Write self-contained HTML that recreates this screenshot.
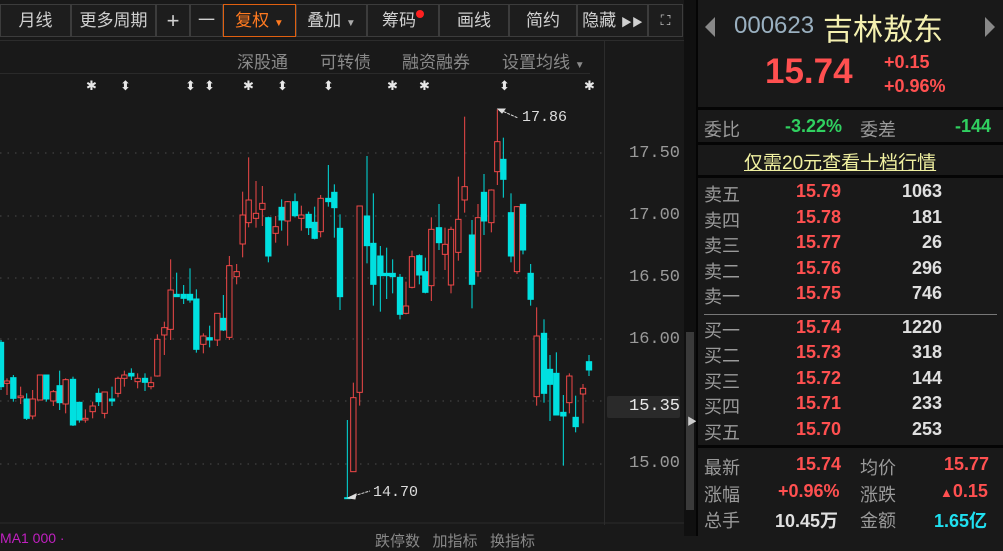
<!DOCTYPE html>
<html><head><meta charset="utf-8"><style>
*{margin:0;padding:0;box-sizing:border-box}
body{width:1003px;height:536px;overflow:hidden;background:#191919;font-family:"Liberation Sans","Noto Sans CJK SC",sans-serif;position:relative;color:#ccc}
.a{position:absolute;white-space:nowrap}
.tb{position:absolute;top:4px;height:33px;border:1px solid #3c3c3c;background:#1d1d1d;color:#d0d0d0;font-size:17px;line-height:31px;text-align:center}
.r{stroke:#f04848;fill:#191919;stroke-width:3}
.c{stroke:#00e0e0;fill:#00e0e0;stroke-width:3}
.ax{position:absolute;left:629px;font-family:"Liberation Mono",monospace;font-size:17px;color:#9a9a9a}
.lbl{position:absolute;left:704px;font-size:18px;color:#9a9a9a}
.rp{position:absolute;font-size:18px;font-weight:bold;color:#ff5050}
.vol{position:absolute;font-size:18px;font-weight:bold;color:#e0e0e0;text-align:right;width:80px;left:862px}
.mk{position:absolute;top:78px;font-size:13px;color:#e8e8e8}
</style></head><body>
<div class="tb" style="left:0;width:71px">月线</div>
<div class="tb" style="left:71px;width:85px">更多周期</div>
<div class="tb" style="left:156px;width:34px;font-size:22px">+</div>
<div class="tb" style="left:190px;width:33px">一</div>
<div class="tb" style="left:223px;width:73px;border-color:#e06010;color:#ff7a20">复权 <span style="font-size:10px">▼</span></div>
<div class="tb" style="left:296px;width:71px">叠加 <span style="font-size:10px;color:#aaa">▼</span></div>
<div class="tb" style="left:367px;width:72px">筹码<span style="display:inline-block;width:8px;height:8px;border-radius:4px;background:#ff2020;vertical-align:8px"></span></div>
<div class="tb" style="left:439px;width:70px">画线</div>
<div class="tb" style="left:509px;width:68px">简约</div>
<div class="tb" style="left:577px;width:71px">隐藏 <span style="font-size:11px">▶▶</span></div>
<div class="tb" style="left:648px;width:35px;font-size:14px">⛶</div>
<div class="a" style="left:0;top:40px;width:684px;height:1px;background:#2c2c2c"></div>
<div class="a" style="left:237px;top:48px;font-size:17px;color:#8a8a8a">深股通</div>
<div class="a" style="left:320px;top:48px;font-size:17px;color:#8a8a8a">可转债</div>
<div class="a" style="left:402px;top:48px;font-size:17px;color:#8a8a8a">融资融券</div>
<div class="a" style="left:502px;top:48px;font-size:17px;color:#8a8a8a">设置均线 <span style="font-size:10px">▼</span></div>
<div class="a" style="left:0;top:73px;width:590px;height:1px;background:#2a2a2a"></div>
<div class="a" style="left:604px;top:40px;width:1px;height:485px;background:#2c2c2c"></div>
<div class="mk" style="left:86px">✱</div><div class="mk" style="left:120px">⬍</div>
<div class="mk" style="left:185px">⬍</div><div class="mk" style="left:204px">⬍</div>
<div class="mk" style="left:243px">✱</div><div class="mk" style="left:277px">⬍</div>
<div class="mk" style="left:323px">⬍</div><div class="mk" style="left:387px">✱</div>
<div class="mk" style="left:419px">✱</div><div class="mk" style="left:499px">⬍</div>
<div class="mk" style="left:584px">✱</div>
<svg class="a" style="left:0;top:0" width="684" height="536">
<g stroke="#3a3a3a" stroke-width="1.5" stroke-dasharray="1.5 6">
<line x1="0" y1="153" x2="604" y2="153"/><line x1="0" y1="216" x2="604" y2="216"/><line x1="0" y1="278" x2="604" y2="278"/><line x1="0" y1="339" x2="604" y2="339"/><line x1="0" y1="401" x2="604" y2="401"/><line x1="0" y1="464" x2="604" y2="464"/>
</g>
<g transform="translate(0,100) scale(0.33333)">
<g class="c"><path d="M3 720V870"/><rect x="-5" y="727" width="16" height="133"/></g>
<g class="r"><path d="M21 835V885"/><rect x="13" y="843" width="16" height="7"/></g>
<g class="c"><path d="M40 825V905"/><rect x="32" y="833" width="16" height="62"/></g>
<g class="r"><path d="M62 860V912"/><rect x="54" y="888" width="16" height="5"/></g>
<g class="c"><path d="M80 880V960"/><rect x="72" y="897" width="16" height="58"/></g>
<g class="r"><path d="M98 870V958"/><rect x="90" y="897" width="16" height="51"/></g>
<g class="r"><path d="M120 825V900"/><rect x="112" y="825" width="16" height="75"/></g>
<g class="c"><path d="M139 825V905"/><rect x="131" y="825" width="16" height="72"/></g>
<g class="r"><path d="M160 870V918"/><rect x="152" y="875" width="16" height="28"/></g>
<g class="c"><path d="M179 812V930"/><rect x="171" y="857" width="16" height="51"/></g>
<g class="r"><path d="M197 835V940"/><rect x="189" y="839" width="16" height="73"/></g>
<g class="c"><path d="M219 830V978"/><rect x="211" y="838" width="16" height="137"/></g>
<g class="c"><path d="M238 905V968"/><rect x="230" y="907" width="16" height="53"/></g>
<g class="r"><path d="M256 928V968"/><rect x="248" y="955" width="16" height="5"/></g>
<g class="r"><path d="M278 905V955"/><rect x="270" y="918" width="16" height="17"/></g>
<g class="c"><path d="M296 865V918"/><rect x="288" y="880" width="16" height="25"/></g>
<g class="r"><path d="M314 875V955"/><rect x="306" y="876" width="16" height="64"/></g>
<g class="c"><path d="M336 860V918"/><rect x="328" y="897" width="16" height="6"/></g>
<g class="r"><path d="M354 830V892"/><rect x="346" y="835" width="16" height="45"/></g>
<g class="r"><path d="M373 812V860"/><rect x="365" y="825" width="16" height="10"/></g>
<g class="c"><path d="M394 805V840"/><rect x="386" y="820" width="16" height="8"/></g>
<g class="r"><path d="M413 820V865"/><rect x="405" y="835" width="16" height="10"/></g>
<g class="c"><path d="M435 820V873"/><rect x="427" y="835" width="16" height="12"/></g>
<g class="r"><path d="M453 830V868"/><rect x="445" y="848" width="16" height="12"/></g>
<g class="r"><path d="M472 703V830"/><rect x="464" y="718" width="16" height="110"/></g>
<g class="r"><path d="M493 665V765"/><rect x="485" y="683" width="16" height="22"/></g>
<g class="r"><path d="M512 478V720"/><rect x="504" y="570" width="16" height="118"/></g>
<g class="c"><path d="M530 518V590"/><rect x="522" y="583" width="16" height="7"/></g>
<g class="c"><path d="M551 555V612"/><rect x="543" y="583" width="16" height="12"/></g>
<g class="c"><path d="M570 505V608"/><rect x="562" y="583" width="16" height="17"/></g>
<g class="c"><path d="M589 568V758"/><rect x="581" y="597" width="16" height="151"/></g>
<g class="r"><path d="M610 700V760"/><rect x="602" y="708" width="16" height="25"/></g>
<g class="c"><path d="M629 677V742"/><rect x="621" y="713" width="16" height="7"/></g>
<g class="r"><path d="M652 640V738"/><rect x="644" y="640" width="16" height="80"/></g>
<g class="c"><path d="M670 585V693"/><rect x="662" y="655" width="16" height="35"/></g>
<g class="r"><path d="M688 468V720"/><rect x="680" y="497" width="16" height="215"/></g>
<g class="r"><path d="M710 492V553"/><rect x="702" y="515" width="16" height="15"/></g>
<g class="r"><path d="M728 275V472"/><rect x="720" y="345" width="16" height="87"/></g>
<g class="r"><path d="M746 172V382"/><rect x="738" y="300" width="16" height="68"/></g>
<g class="r"><path d="M768 243V383"/><rect x="760" y="340" width="16" height="15"/></g>
<g class="r"><path d="M787 258V378"/><rect x="779" y="310" width="16" height="18"/></g>
<g class="c"><path d="M805 350V487"/><rect x="797" y="353" width="16" height="115"/></g>
<g class="r"><path d="M827 348V428"/><rect x="819" y="380" width="16" height="20"/></g>
<g class="c"><path d="M845 298V392"/><rect x="837" y="322" width="16" height="38"/></g>
<g class="r"><path d="M863 303V437"/><rect x="855" y="305" width="16" height="58"/></g>
<g class="c"><path d="M885 280V352"/><rect x="877" y="305" width="16" height="42"/></g>
<g class="r"><path d="M904 317V392"/><rect x="896" y="345" width="16" height="10"/></g>
<g class="c"><path d="M926 335V405"/><rect x="918" y="343" width="16" height="40"/></g>
<g class="c"><path d="M944 320V418"/><rect x="936" y="367" width="16" height="48"/></g>
<g class="r"><path d="M962 285V412"/><rect x="954" y="295" width="16" height="100"/></g>
<g class="c"><path d="M985 195V320"/><rect x="977" y="295" width="16" height="10"/></g>
<g class="c"><path d="M1003 253V413"/><rect x="995" y="277" width="16" height="46"/></g>
<g class="c"><path d="M1020 343V630"/><rect x="1012" y="385" width="16" height="205"/></g>
</g>
<g transform="translate(340,100) scale(0.33333)">
<g class="c"><path d="M22 960V1195"/><rect x="14" y="1193" width="16" height="3"/></g>
<g class="r"><path d="M40 848V1115"/><rect x="32" y="893" width="16" height="222"/></g>
<g class="r"><path d="M59 318V917"/><rect x="51" y="318" width="16" height="559"/></g>
<g class="c"><path d="M81 168V490"/><rect x="73" y="348" width="16" height="89"/></g>
<g class="c"><path d="M100 280V617"/><rect x="92" y="430" width="16" height="123"/></g>
<g class="c"><path d="M121 438V635"/><rect x="113" y="468" width="16" height="59"/></g>
<g class="c"><path d="M140 443V597"/><rect x="132" y="520" width="16" height="7"/></g>
<g class="c"><path d="M158 478V580"/><rect x="150" y="520" width="16" height="10"/></g>
<g class="c"><path d="M180 522V658"/><rect x="172" y="532" width="16" height="111"/></g>
<g class="r"><path d="M198 545V643"/><rect x="190" y="618" width="16" height="22"/></g>
<g class="r"><path d="M216 452V565"/><rect x="208" y="470" width="16" height="92"/></g>
<g class="c"><path d="M238 463V553"/><rect x="230" y="467" width="16" height="58"/></g>
<g class="c"><path d="M256 473V580"/><rect x="248" y="515" width="16" height="62"/></g>
<g class="r"><path d="M274 352V603"/><rect x="266" y="388" width="16" height="169"/></g>
<g class="c"><path d="M297 312V450"/><rect x="289" y="383" width="16" height="45"/></g>
<g class="r"><path d="M315 383V510"/><rect x="307" y="433" width="16" height="30"/></g>
<g class="r"><path d="M333 380V580"/><rect x="325" y="388" width="16" height="167"/></g>
<g class="r"><path d="M355 230V482"/><rect x="347" y="358" width="16" height="99"/></g>
<g class="r"><path d="M374 50V338"/><rect x="366" y="260" width="16" height="40"/></g>
<g class="c"><path d="M396 360V625"/><rect x="388" y="405" width="16" height="148"/></g>
<g class="r"><path d="M414 312V530"/><rect x="406" y="353" width="16" height="162"/></g>
<g class="c"><path d="M432 222V405"/><rect x="424" y="277" width="16" height="86"/></g>
<g class="r"><path d="M454 268V397"/><rect x="446" y="270" width="16" height="98"/></g>
<g class="r"><path d="M472 28V255"/><rect x="464" y="125" width="16" height="90"/></g>
<g class="c"><path d="M490 113V293"/><rect x="482" y="178" width="16" height="60"/></g>
<g class="c"><path d="M513 280V487"/><rect x="505" y="338" width="16" height="130"/></g>
<g class="r"><path d="M531 318V522"/><rect x="523" y="320" width="16" height="195"/></g>
<g class="c"><path d="M549 313V463"/><rect x="541" y="313" width="16" height="137"/></g>
<g class="c"><path d="M572 492V617"/><rect x="564" y="520" width="16" height="78"/></g>
<g class="r"><path d="M590 622V917"/><rect x="582" y="708" width="16" height="182"/></g>
<g class="c"><path d="M612 658V908"/><rect x="604" y="700" width="16" height="180"/></g>
<g class="c"><path d="M630 765V963"/><rect x="622" y="808" width="16" height="45"/></g>
<g class="c"><path d="M649 757V945"/><rect x="641" y="820" width="16" height="125"/></g>
<g class="c"><path d="M670 885V1097"/><rect x="662" y="937" width="16" height="11"/></g>
<g class="r"><path d="M688 820V940"/><rect x="680" y="828" width="16" height="80"/></g>
<g class="c"><path d="M707 887V997"/><rect x="699" y="952" width="16" height="28"/></g>
<g class="r"><path d="M729 852V970"/><rect x="721" y="865" width="16" height="17"/></g>
<g class="c"><path d="M747 765V828"/><rect x="739" y="785" width="16" height="25"/></g>
</g>
<g stroke="#ddd" fill="#ddd" stroke-width="1">
<path d="M500 110L518 118" stroke-dasharray="3 1"/><path d="M498 109l7 0l-3 4z"/>
<path d="M350 497L370 491" stroke-dasharray="3 1"/><path d="M348 498l8 -4l-1 5z"/>
</g>
<line x1="0" y1="523" x2="684" y2="523" stroke="#2c2c2c"/>
</svg>
<div class="a" style="left:522px;top:109px;font-family:'Liberation Mono',monospace;font-size:15px;color:#ddd">17.86</div>
<div class="a" style="left:373px;top:484px;font-family:'Liberation Mono',monospace;font-size:15px;color:#ddd">14.70</div>
<div class="ax" style="top:144px">17.50</div>
<div class="ax" style="top:206px">17.00</div>
<div class="ax" style="top:268px">16.50</div>
<div class="ax" style="top:330px">16.00</div>
<div class="ax" style="top:454px">15.00</div>
<div class="a" style="left:607px;top:396px;width:73px;height:22px;background:#2a2a2a;border-radius:2px"></div>
<div class="ax" style="top:397px;color:#e8e8e8">15.35</div>
<div class="a" style="left:0;top:530px;font-size:14px;color:#c020c0">MA1 000 ·</div>
<div class="a" style="left:375px;top:530px;font-size:15px;color:#888">跌停数 &nbsp; 加指标 &nbsp; 换指标</div>
<div class="a" style="left:684px;top:0;width:12px;height:536px;background:#101010"></div>
<div class="a" style="left:686px;top:332px;width:8px;height:178px;background:#3a3a3a"></div>
<div class="a" style="left:687px;top:413px;font-size:10px;color:#ccc">▶</div>
<div class="a" style="left:696px;top:0;width:2px;height:536px;background:#050505"></div>
<div class="a" style="left:705px;top:17px;width:0;height:0;border-top:10px solid transparent;border-bottom:10px solid transparent;border-right:10px solid #888"></div>
<div class="a" style="left:985px;top:17px;width:0;height:0;border-top:10px solid transparent;border-bottom:10px solid transparent;border-left:10px solid #888"></div>
<div class="a" style="left:734px;top:12px;font-size:24px;color:#9ab0c0">000623</div>
<div class="a" style="left:823px;top:5px;font-size:30px;color:#f4f0b0">吉林敖东</div>
<div class="a" style="left:765px;top:52px;font-size:35px;font-weight:bold;color:#ff5050">15.74</div>
<div class="a" style="left:884px;top:52px;font-size:18px;font-weight:bold;color:#ff5050">+0.15</div>
<div class="a" style="left:884px;top:76px;font-size:18px;font-weight:bold;color:#ff5050">+0.96%</div>
<div class="a" style="left:698px;top:107px;width:305px;height:3px;background:#050505"></div>
<div class="lbl" style="top:116px">委比</div>
<div class="a" style="left:785px;top:116px;font-size:18px;font-weight:bold;color:#30d060">-3.22%</div>
<div class="lbl" style="left:860px;top:116px">委差</div>
<div class="a" style="left:955px;top:116px;font-size:18px;font-weight:bold;color:#30d060">-144</div>
<div class="a" style="left:698px;top:142px;width:305px;height:3px;background:#050505"></div>
<div class="a" style="left:744px;top:148px;font-size:19px;color:#f0f0a0;text-decoration:underline">仅需20元查看十档行情</div>
<div class="a" style="left:698px;top:175px;width:305px;height:3px;background:#050505"></div>
<div class="lbl" style="top:181px">卖五</div><div class="rp" style="left:796px;top:181px">15.79</div><div class="vol" style="top:181px">1063</div>
<div class="lbl" style="top:207px">卖四</div><div class="rp" style="left:796px;top:207px">15.78</div><div class="vol" style="top:207px">181</div>
<div class="lbl" style="top:232px">卖三</div><div class="rp" style="left:796px;top:232px">15.77</div><div class="vol" style="top:232px">26</div>
<div class="lbl" style="top:258px">卖二</div><div class="rp" style="left:796px;top:258px">15.76</div><div class="vol" style="top:258px">296</div>
<div class="lbl" style="top:283px">卖一</div><div class="rp" style="left:796px;top:283px">15.75</div><div class="vol" style="top:283px">746</div>
<div class="a" style="left:704px;top:314px;width:293px;height:1px;background:#777"></div>
<div class="lbl" style="top:317px">买一</div><div class="rp" style="left:796px;top:317px">15.74</div><div class="vol" style="top:317px">1220</div>
<div class="lbl" style="top:342px">买二</div><div class="rp" style="left:796px;top:342px">15.73</div><div class="vol" style="top:342px">318</div>
<div class="lbl" style="top:368px">买三</div><div class="rp" style="left:796px;top:368px">15.72</div><div class="vol" style="top:368px">144</div>
<div class="lbl" style="top:393px">买四</div><div class="rp" style="left:796px;top:393px">15.71</div><div class="vol" style="top:393px">233</div>
<div class="lbl" style="top:419px">买五</div><div class="rp" style="left:796px;top:419px">15.70</div><div class="vol" style="top:419px">253</div>
<div class="a" style="left:698px;top:445px;width:305px;height:3px;background:#050505"></div>
<div class="lbl" style="top:454px">最新</div><div class="rp" style="left:796px;top:454px">15.74</div>
<div class="lbl" style="left:860px;top:454px">均价</div><div class="rp" style="left:944px;top:454px">15.77</div>
<div class="lbl" style="top:481px">涨幅</div><div class="rp" style="left:778px;top:481px">+0.96%</div>
<div class="lbl" style="left:860px;top:481px">涨跌</div><div class="rp" style="left:940px;top:481px"><span style="font-size:13px">▲</span>0.15</div>
<div class="lbl" style="top:507px">总手</div><div class="a" style="left:775px;top:507px;font-size:18px;font-weight:bold;color:#e0e0e0">10.45万</div>
<div class="lbl" style="left:860px;top:507px">金额</div><div class="a" style="left:934px;top:507px;font-size:18px;font-weight:bold;color:#20e0f0">1.65亿</div>
</body></html>
